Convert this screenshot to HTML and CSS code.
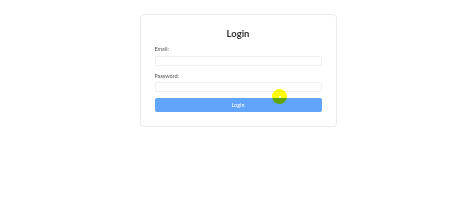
FILE: index.html
```html
<!DOCTYPE html>
<html>
<head>
<meta charset="utf-8">
<link rel="stylesheet" href="styles.css">
</head>
<body>
<div class="page">
  <form class="card">
    <h1 class="title">Login</h1>
    <div class="field">
      <label class="label">Email:</label>
      <div class="input"></div>
    </div>
    <div class="field">
      <label class="label">Password:</label>
      <div class="input"></div>
    </div>
    <div class="button">Login</div>
  </form>
</div>
<div class="cursor"></div>
<div class="dot"></div>
</body>
</html>
```
FILE: styles.css
```css
html, body {
  margin: 0;
  padding: 0;
  background: #ffffff;
  font-family: Lato, "Open Sans", "Liberation Sans", sans-serif;
}
.page {
  padding-top: 14px;
  display: flex;
  justify-content: center;
  padding-left: 2px;
}
.card {
  width: 197px;
  box-sizing: border-box;
  border: 1px solid #ececec;
  border-radius: 4px;
  box-shadow: 0 1px 2px rgba(0,0,0,0.04);
  padding: 13px 14px 14px 14px;
  display: flex;
  flex-direction: column;
  margin: 0;
}
.title {
  margin: 0 0 6px 0;
  font-size: 9.5px;
  line-height: 12px;
  font-weight: 700;
  color: #333333;
  text-align: center;
}
.field {
  display: flex;
  flex-direction: column;
  margin-bottom: 7px;
}
.field + .field {
  margin-bottom: 6px;
}
.label {
  font-size: 5.5px;
  line-height: 6px;
  color: #555555;
  margin-bottom: 4px;
}
.field + .field .label {
  margin-bottom: 3px;
}
.input {
  height: 10px;
  box-sizing: border-box;
  border: 1px solid #f0f0f0;
  border-radius: 2px;
  background: #ffffff;
}
.button {
  height: 14px;
  background: #60a5fa;
  border-radius: 2px;
  color: #ffffff;
  font-size: 5.5px;
  line-height: 14px;
  text-align: center;
}
.cursor {
  position: absolute;
  left: 272px;
  top: 89px;
  width: 15px;
  height: 15px;
  border-radius: 50%;
  background: #ffff00;
  mix-blend-mode: multiply;
}
.dot {
  position: absolute;
  left: 278.5px;
  top: 95.5px;
  width: 2px;
  height: 2px;
  border-radius: 50%;
  background: #ffffff;
}
```
